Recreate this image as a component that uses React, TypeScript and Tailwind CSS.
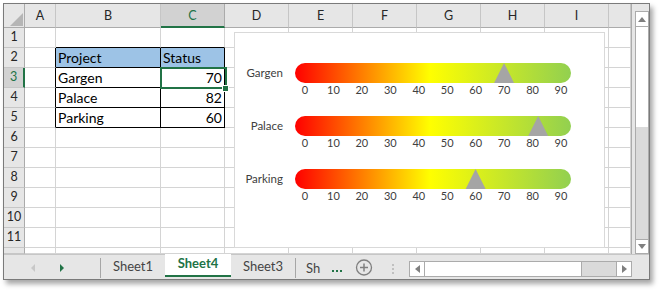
import React from 'react';

const COLS = [
  { w: 31, l: 'A' },
  { w: 105, l: 'B' },
  { w: 64, l: 'C' },
  { w: 64, l: 'D' },
  { w: 64, l: 'E' },
  { w: 64, l: 'F' },
  { w: 64, l: 'G' },
  { w: 64, l: 'H' },
  { w: 64, l: 'I' },
  { w: 22, l: '' },
];

const DATA: Record<number, [string, string]> = {
  2: ['Project', 'Status'],
  3: ['Gargen', '70'],
  4: ['Palace', '82'],
  5: ['Parking', '60'],
};

const ITEMS = [
  { name: 'Gargen', v: 70 },
  { name: 'Palace', v: 82 },
  { name: 'Parking', v: 60 },
];

function Chart() {
  const vx = (v: number) => 70 + v * 2.844;
  return (
    <svg width="369" height="214" viewBox="0 0 369 214" className="block">
      <defs>
        <linearGradient id="gb" x1="0" y1="0" x2="1" y2="0">
          <stop offset="0" stopColor="#ff0000" />
          <stop offset="0.49" stopColor="#ffff00" />
          <stop offset="1" stopColor="#92d050" />
        </linearGradient>
      </defs>
      {ITEMS.map((it, i) => {
        const y = 30 + i * 53;
        const x = vx(it.v);
        return (
          <g key={it.name}>
            <text x="48" y={y + 14} textAnchor="end" fontFamily="Lato, sans-serif" fontSize="11.5" fill="#404040">
              {it.name}
            </text>
            <rect x="60" y={y} width="276" height="20" rx="10" fill="url(#gb)" />
            <polygon points={`${x},${y} ${x - 10},${y + 20} ${x + 10},${y + 20}`} fill="#a5a5a5" />
            {[0, 10, 20, 30, 40, 50, 60, 70, 80, 90].map((t) => (
              <text key={t} x={vx(t)} y={y + 31} textAnchor="middle" fontFamily="Lato, sans-serif" fontSize="11" fill="#404040">
                {t}
              </text>
            ))}
          </g>
        );
      })}
    </svg>
  );
}

function Grid() {
  const rows = Array.from({ length: 12 }, (_, i) => i + 1);
  return (
    <div className="relative grid grid-cols-[21px_31px_105px_64px_64px_64px_64px_64px_64px_64px_22px] grid-rows-[24px_repeat(11,20px)_6px] w-[627px] h-[250px] overflow-hidden bg-white">
      {/* corner */}
      <div className="bg-[#e6e6e6] border-r border-b border-[#ababab] relative">
        <svg width="21" height="24" className="absolute left-0 top-0">
          <polygon points="19,9 19,22 6,22" fill="#b5b5b5" />
        </svg>
      </div>
      {COLS.map((c, i) =>
        c.l === 'C' ? (
          <div
            key={i}
            className="bg-[#d2d2d2] border-r border-[#ababab] border-b-2 border-b-[#217346] flex items-center justify-center text-[12.5px] text-[#217346] [font-family:Lato,sans-serif] pt-[2px]"
          >
            {c.l}
          </div>
        ) : (
          <div
            key={i}
            className="bg-[#e6e6e6] border-r border-b border-[#c6c6c6] border-b-[#ababab] flex items-center justify-center text-[12.5px] text-[#262626] [font-family:Lato,sans-serif] pt-[2px]"
          >
            {c.l}
          </div>
        )
      )}
      {rows.map((r) => (
        <React.Fragment key={r}>
          {r === 3 ? (
            <div className="bg-[#d2d2d2] border-b border-[#c6c6c6] border-r-2 border-r-[#217346] flex items-center justify-center text-[12.5px] text-[#217346] [font-family:Lato,sans-serif]">
              {r}
            </div>
          ) : (
            <div className="bg-[#e6e6e6] border-b border-[#c6c6c6] border-r border-r-[#ababab] flex items-center justify-center text-[12.5px] text-[#262626] [font-family:Lato,sans-serif]">
              {r <= 11 ? r : ''}
            </div>
          )}
          {COLS.map((c, ci) => {
            const inTable = r >= 2 && r <= 5;
            const blackRight = inTable && ci <= 2;
            const blackBottom = r >= 1 && r <= 5 && (ci === 1 || ci === 2);
            const header = r === 2 && (ci === 1 || ci === 2);
            const rc = blackRight ? 'border-r-black' : 'border-r-[#d4d4d4]';
            const bc = blackBottom ? 'border-b-black' : 'border-b-[#d4d4d4]';
            const bg = header ? 'bg-[#9dc3e6]' : 'bg-white';
            const d = DATA[r];
            let txt = '';
            if (d && ci === 1) txt = d[0];
            if (d && ci === 2) txt = d[1];
            const right = r >= 3 && ci === 2;
            return (
              <div
                key={ci}
                className={`border-r border-b ${rc} ${bc} ${bg} flex items-end ${right ? 'justify-end pr-[2px]' : 'justify-start pl-[2px]'} text-[14px] leading-[18px] text-black [font-family:Lato,sans-serif]`}
              >
                {txt}
              </div>
            );
          })}
        </React.Fragment>
      ))}
      {/* selection */}
      <div className="absolute left-[156px] top-[63px] w-[67px] h-[22px] border-2 border-[#217346]" />
      <div className="absolute left-[218px] top-[81px] w-[7px] h-[7px] bg-[#217346] border border-white" />
      {/* chart */}
      <div className="absolute left-[230px] top-[28px] w-[371px] h-[216px] bg-white border border-[#d9d9d9]">
        <Chart />
      </div>
    </div>
  );
}

function VScroll() {
  return (
    <div className="w-[18px] h-[250px] border-l border-[#ababab] bg-[#e6e6e6] flex flex-col pl-[3px] pt-[7px]">
      <div className="h-[16px] bg-white border border-[#ababab] flex items-center justify-center">
        <svg width="8" height="5"><polygon points="4,0 8,5 0,5" fill="#7f7f7f" /></svg>
      </div>
      <div className="h-[100px] bg-white border-x border-[#ababab]" />
      <div className="flex-1 bg-[#dadada] border-x border-[#ababab]" />
      <div className="h-[15px] bg-white border border-[#ababab] flex items-center justify-center">
        <svg width="8" height="5"><polygon points="0,0 8,0 4,5" fill="#7f7f7f" /></svg>
      </div>
    </div>
  );
}

function TabBar() {
  return (
    <div className="h-[25px] flex items-stretch bg-[#e6e6e6] [font-family:Lato,sans-serif] text-[13px]">
      <div className="w-[96px] border-t border-[#c6c6c6] flex items-center">
        <svg width="96" height="24">
          <polygon points="27,13 31,9 31,17" fill="#c8c8c8" />
          <polygon points="56,9 60,13 56,17" fill="#217346" />
        </svg>
      </div>
      <div className="w-px border-t border-[#c6c6c6] flex flex-col">
        <div className="h-[3px]" />
        <div className="h-[20px] bg-[#a6a6a6]" />
      </div>
      <div className="w-[64px] border-t border-[#c6c6c6] flex items-center justify-center text-[#444444] pb-[1px]">Sheet1</div>
      <div className="w-[66px] -mt-px h-[24px] bg-white border-b-2 border-[#217346] flex items-center justify-center font-bold text-[#217346]">Sheet4</div>
      <div className="w-[64px] border-t border-[#c6c6c6] flex items-center justify-center text-[#444444] pb-[1px]">Sheet3</div>
      <div className="w-px border-t border-[#c6c6c6] flex flex-col">
        <div className="h-[3px]" />
        <div className="h-[20px] bg-[#a6a6a6]" />
      </div>
      <div className="w-[112px] border-t border-[#c6c6c6] relative">
        <span className="absolute left-[10px] top-[4px] text-[#444444]">Sh</span>
        <svg width="112" height="24" className="absolute left-0 top-0">
          <rect x="36" y="15" width="2" height="2" fill="#217346" />
          <rect x="40" y="15" width="2" height="2" fill="#217346" />
          <rect x="44" y="15" width="2" height="2" fill="#217346" />
          <circle cx="68" cy="12.5" r="7.5" fill="none" stroke="#7f7f7f" strokeWidth="1.3" />
          <line x1="64" y1="12.5" x2="72" y2="12.5" stroke="#7f7f7f" strokeWidth="1.5" />
          <line x1="68" y1="8.5" x2="68" y2="16.5" stroke="#7f7f7f" strokeWidth="1.5" />
          <rect x="96" y="9" width="2" height="2" fill="#c0c0c0" />
          <rect x="96" y="13" width="2" height="2" fill="#c0c0c0" />
          <rect x="96" y="17" width="2" height="2" fill="#c0c0c0" />
        </svg>
      </div>
      <div className="flex-1 border-t border-[#c6c6c6] pt-[6px] pl-[1px]">
        <div className="flex h-[16px] w-[223px] border border-[#ababab] bg-[#dadada]">
          <div className="w-[15px] bg-white border-r border-[#ababab] flex items-center justify-center">
            <svg width="5" height="8"><polygon points="0,4 5,0 5,8" fill="#7f7f7f" /></svg>
          </div>
          <div className="w-[157px] bg-white border-r border-[#ababab]" />
          <div className="flex-1" />
          <div className="w-[15px] bg-white border-l border-[#ababab] flex items-center justify-center">
            <svg width="5" height="8"><polygon points="0,0 5,4 0,8" fill="#7f7f7f" /></svg>
          </div>
        </div>
      </div>
    </div>
  );
}

export default function App() {
  return (
    <div className="w-[659px] h-[291px] bg-white pt-[3px] pl-[3px] overflow-hidden">
      <div className="w-[647px] h-[277px] border border-[#7a7a7a] shadow-[3px_4px_5px_rgba(0,0,0,0.35)] flex flex-col bg-[#e6e6e6]">
        <div className="flex">
          <Grid />
          <VScroll />
        </div>
        <TabBar />
      </div>
    </div>
  );
}
